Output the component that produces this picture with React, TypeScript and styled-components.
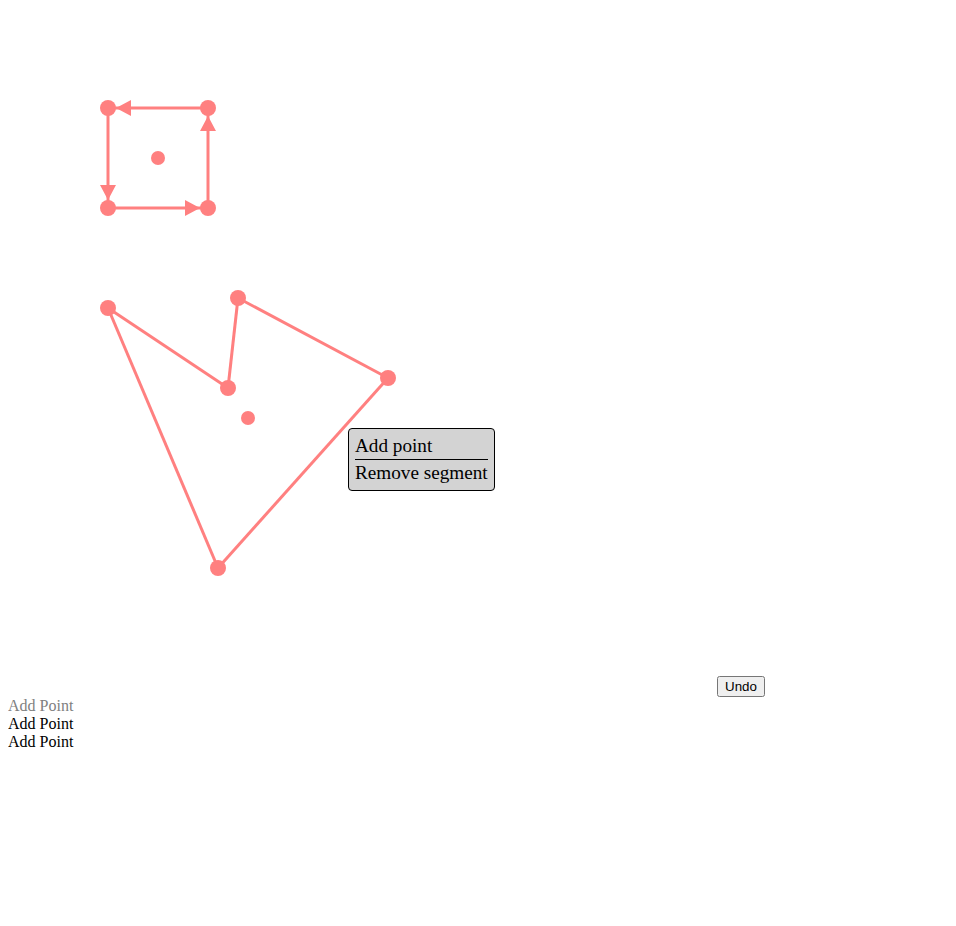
import styled, { createGlobalStyle } from 'styled-components';

type Point = { x: number; y: number };

const STROKE = '#ff8080';
const VERTEX_R = 8;
const CENTER_R = 7;
const ARROW_LEN = 15;
const ARROW_HALF = 8;

const square: Point[] = [
  { x: 200, y: 100 },
  { x: 100, y: 100 },
  { x: 100, y: 200 },
  { x: 200, y: 200 },
];

const polygon: Point[] = [
  { x: 100, y: 300 },
  { x: 220, y: 380 },
  { x: 230, y: 290 },
  { x: 380, y: 370 },
  { x: 210, y: 560 },
];

const shapes = [
  { points: square, center: { x: 150, y: 150 }, arrows: true },
  { points: polygon, center: { x: 240, y: 410 }, arrows: false },
];

const history = [
  { label: 'Add Point', undone: true },
  { label: 'Add Point', undone: false },
  { label: 'Add Point', undone: false },
];

const GlobalStyle = createGlobalStyle`
  body {
    margin: 8px;
    font-family: "Liberation Serif", "Times New Roman", serif;
    font-size: 16px;
    background: #fff;
    color: #000;
  }
`;

const arrowHead = (a: Point, b: Point) => {
  const len = Math.hypot(b.x - a.x, b.y - a.y);
  const dx = (b.x - a.x) / len;
  const dy = (b.y - a.y) / len;
  const tip = { x: b.x - dx * VERTEX_R, y: b.y - dy * VERTEX_R };
  const base = { x: tip.x - dx * ARROW_LEN, y: tip.y - dy * ARROW_LEN };
  const px = -dy * ARROW_HALF;
  const py = dx * ARROW_HALF;
  return `${tip.x},${tip.y} ${base.x + px},${base.y + py} ${base.x - px},${base.y - py}`;
};

const App = () => {
  return (
    <Page>
      <GlobalStyle />
      <Canvas width={709} height={683}>
        {shapes.map((shape, si) => (
          <g key={si}>
            {shape.points.map((p, i) => {
              const next = shape.points[(i + 1) % shape.points.length];
              return (
                <g key={i}>
                  <line
                    x1={p.x}
                    y1={p.y}
                    x2={next.x}
                    y2={next.y}
                    stroke={STROKE}
                    strokeWidth={3}
                  />
                  {shape.arrows && (
                    <polygon points={arrowHead(p, next)} fill={STROKE} />
                  )}
                </g>
              );
            })}
            {shape.points.map((p, i) => (
              <circle key={i} cx={p.x} cy={p.y} r={VERTEX_R} fill={STROKE} />
            ))}
            <circle
              cx={shape.center.x}
              cy={shape.center.y}
              r={CENTER_R}
              fill={STROKE}
            />
          </g>
        ))}
      </Canvas>
      <UndoButton>Undo</UndoButton>
      <HistoryList>
        {history.map((item, i) => (
          <HistoryItem key={i} $undone={item.undone}>
            {item.label}
          </HistoryItem>
        ))}
      </HistoryList>
      <ContextMenu>
        <MenuItem $divider>Add point</MenuItem>
        <MenuItem>Remove segment</MenuItem>
      </ContextMenu>
    </Page>
  );
};

const Page = styled.div`
  position: relative;
`;

const Canvas = styled.svg`
  display: inline;
`;

const UndoButton = styled.button`
  font-family: "Liberation Sans", Arial, sans-serif;
  font-size: 13.333px;
`;

const HistoryList = styled.div`
  display: flex;
  flex-direction: column;
`;

const HistoryItem = styled.div<{ $undone?: boolean }>`
  color: ${({ $undone }) => ($undone ? 'gray' : '#000')};
  line-height: 18px;
`;

const ContextMenu = styled.div`
  position: absolute;
  left: 340px;
  top: 420px;
  background: lightgray;
  border: 1px solid #000;
  border-radius: 4px;
  padding: 4px 6px;
  font-size: 1.2em;
`;

const MenuItem = styled.div<{ $divider?: boolean }>`
  line-height: 22px;
  padding: 2px 0;
  white-space: nowrap;
  border-bottom: ${({ $divider }) => ($divider ? '1px solid #000' : 'none')};
`;

export default App;
